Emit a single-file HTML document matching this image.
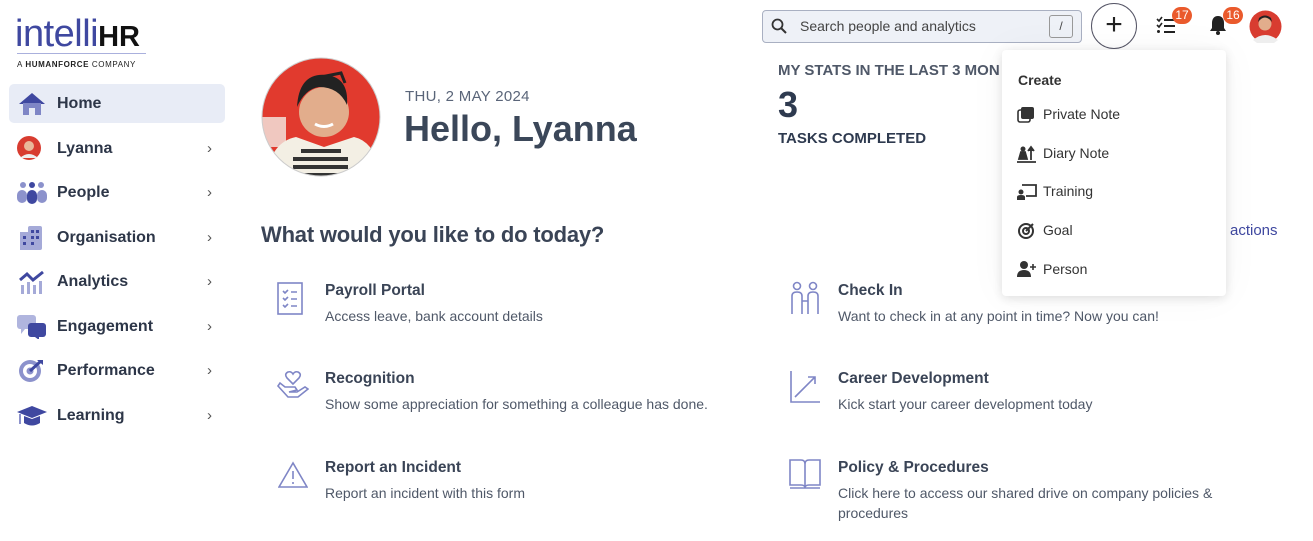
<!DOCTYPE html>
<html><head><meta charset="utf-8"><style>
*{box-sizing:border-box;margin:0;padding:0}
body{width:1313px;height:541px;overflow:hidden;background:#fff;font-family:"Liberation Sans",sans-serif;color:#2e3a4f;position:relative}
.a{position:absolute}
.nav{position:absolute;left:9px;width:216px;height:39px;display:flex;align-items:center;font-size:16px;font-weight:bold;color:#2d3648}
.nav .ic{position:absolute;left:8px;top:8px;width:30px;height:24px}
.nav .t{position:absolute;left:48px}
.nav .ch{position:absolute;left:198px;color:#555;font-weight:normal;font-size:15px}
.tt{position:absolute;font-size:15.5px;font-weight:bold;color:#3a4456}
.ds{position:absolute;font-size:14px;color:#4f5868;line-height:20px}
.mi{position:absolute;left:1043px;font-size:14px;color:#333}
.mic{position:absolute;left:1017px;width:20px;height:18px}
.badge{position:absolute;background:#ea5a2c;color:#fff;font-size:12px;border-radius:9px;height:17px;width:20px;text-align:center;line-height:17px}
</style></head><body>
<div class="a" style="left:15px;top:12px;font-size:38px;color:#3f48a0;letter-spacing:-0.5px;line-height:44px">intelli<b style="color:#111;font-size:29px;letter-spacing:0">HR</b></div>
<div class="a" style="left:17px;top:53px;width:129px;height:1px;background:#aab0dd"></div>
<div class="a" style="left:17px;top:60px;font-size:8px;letter-spacing:0.6px;color:#222">A <b>HUMANFORCE</b> COMPANY</div>

<div class="nav" style="top:84px;background:#e8ecf6;border-radius:5px"><svg class="ic" viewBox="0 0 30 24"><path d="M2 12L15 1l13 11" fill="#3f48a0"/><path d="M6 11h18v12h-6v-7h-6v7H6z" fill="#7f86c6"/></svg><span class="t">Home</span></div>
<div class="nav" style="top:129px"><svg class="ic" viewBox="0 0 30 24" style="left:8px;top:7px"><circle cx="12" cy="12" r="12" fill="#d83c30"/><circle cx="12" cy="10" r="5" fill="#e9b89a"/><path d="M3 22q9-8 18 0" fill="#eee"/></svg><span class="t">Lyanna</span><span class="ch">›</span></div>
<div class="nav" style="top:173px"><svg class="ic" viewBox="0 0 30 24"><circle cx="6" cy="4" r="3" fill="#8c92cc"/><circle cx="15" cy="4" r="3" fill="#3f48a0"/><circle cx="24" cy="4" r="3" fill="#8c92cc"/><rect x="0" y="9" width="10" height="13" rx="5" fill="#8c92cc"/><rect x="20" y="9" width="10" height="13" rx="5" fill="#8c92cc"/><rect x="10" y="9" width="10" height="14" rx="5" fill="#3f48a0"/></svg><span class="t">People</span><span class="ch">›</span></div>
<div class="nav" style="top:218px"><svg class="ic" viewBox="0 0 30 24"><rect x="3" y="6" width="12" height="18" fill="#a5aad8"/><rect x="11" y="0" width="14" height="24" rx="2" fill="#a5aad8"/><g fill="#3f48a0"><rect x="6" y="10" width="3" height="3"/><rect x="6" y="16" width="3" height="3"/><rect x="14" y="4" width="3" height="3"/><rect x="19" y="4" width="3" height="3"/><rect x="14" y="10" width="3" height="3"/><rect x="19" y="10" width="3" height="3"/><rect x="14" y="16" width="3" height="3"/></g></svg><span class="t">Organisation</span><span class="ch">›</span></div>
<div class="nav" style="top:262px"><svg class="ic" viewBox="0 0 30 24"><path d="M3 10l7-6 6 6 10-8" stroke="#3f48a0" stroke-width="3" fill="none"/><g fill="#a5aad8"><rect x="4" y="15" width="3" height="9"/><rect x="10" y="12" width="3" height="12"/><rect x="16" y="15" width="3" height="9"/><rect x="22" y="11" width="3" height="13"/></g></svg><span class="t">Analytics</span><span class="ch">›</span></div>
<div class="nav" style="top:307px"><svg class="ic" viewBox="0 0 30 24"><rect x="0" y="0" width="19" height="14" rx="3" fill="#b0b5de"/><path d="M4 14v5l4-5z" fill="#b0b5de"/><rect x="11" y="8" width="18" height="14" rx="3" fill="#3f48a0"/><path d="M22 22v3l-4-3z" fill="#3f48a0"/></svg><span class="t">Engagement</span><span class="ch">›</span></div>
<div class="nav" style="top:351px"><svg class="ic" viewBox="0 0 30 24"><circle cx="13" cy="12" r="11" fill="#8c92cc"/><circle cx="13" cy="12" r="7" fill="#fff"/><circle cx="13" cy="12" r="3.5" fill="#8c92cc"/><path d="M13 12L24 2" stroke="#3f48a0" stroke-width="3"/><path d="M20 1l6 0 0 5z" fill="#3f48a0"/></svg><span class="t">Performance</span><span class="ch">›</span></div>
<div class="nav" style="top:396px"><svg class="ic" viewBox="0 0 30 24"><path d="M0 8L15 2l15 6-15 6z" fill="#3f48a0"/><path d="M7 12v7q8 5 16 0v-7l-8 3z" fill="#3f48a0"/><path d="M3 10v10" stroke="#8c92cc" stroke-width="2"/></svg><span class="t">Learning</span><span class="ch">›</span></div>

<!-- top bar -->
<div class="a" style="left:762px;top:10px;width:320px;height:33px;background:#eef1f7;border:1px solid #a9b0c2;border-radius:4px"></div>
<svg class="a" style="left:771px;top:18px" width="16" height="16" viewBox="0 0 16 16"><circle cx="6.5" cy="6.5" r="5" stroke="#333" stroke-width="1.8" fill="none"/><path d="M10 10l5 5" stroke="#333" stroke-width="2"/></svg>
<div class="a" style="left:800px;top:18px;font-size:14px;color:#444">Search people and analytics</div>
<div class="a" style="left:1049px;top:15px;width:24px;height:23px;border:1px solid #999;border-radius:3px;font-size:12px;text-align:center;line-height:21px;color:#444">/</div>
<div class="a" style="left:1091px;top:3px;width:46px;height:46px;border:1.5px solid #556;border-radius:50%;font-size:30px;text-align:center;line-height:42px;color:#222;font-weight:300">+</div>
<svg class="a" style="left:1156px;top:16px" width="20" height="18" viewBox="0 0 20 18"><path d="M1 3l2 2 3-4M1 9l2 2 3-4" stroke="#222" stroke-width="1.6" fill="none"/><circle cx="2.5" cy="15.5" r="1.5" fill="#222"/><path d="M8 4h11M8 10h11M8 16h11" stroke="#222" stroke-width="2"/></svg>
<div class="badge" style="left:1172px;top:7px">17</div>
<svg class="a" style="left:1209px;top:15px" width="18" height="20" viewBox="0 0 18 20"><path d="M9 1c-4 0-6 3-6 7v5l-2 3h16l-2-3V8c0-4-2-7-6-7z" fill="#222"/><circle cx="9" cy="18" r="2" fill="#222"/></svg>
<div class="badge" style="left:1223px;top:7px">16</div>
<svg class="a" style="left:1249px;top:10px" width="33" height="33" viewBox="0 0 33 33"><circle cx="16.5" cy="16.5" r="16" fill="#d83c30"/><circle cx="16" cy="14" r="6.5" fill="#e2ad8c"/><path d="M9 12q7-9 14 0l-1-4q-6-5-12 0z" fill="#222"/><path d="M4 30q12-10 25 0l-4 3H8z" fill="#eee"/></svg>

<!-- greeting -->
<svg class="a" style="left:261px;top:57px" width="120" height="120" viewBox="0 0 120 120"><defs><clipPath id="c"><circle cx="60" cy="60" r="59"/></clipPath></defs><g clip-path="url(#c)"><rect width="120" height="120" fill="#e13a2e"/><rect x="0" y="60" width="25" height="30" fill="#f0c8c0"/><circle cx="63" cy="55" r="25" fill="#e2ad8c"/><path d="M36 50q2-35 30-32 22 3 20 30-8-18-28-18-14 2-22 20z" fill="#222"/><path d="M60 20l20-4 4 10" stroke="#222" stroke-width="3" fill="none"/><path d="M5 120q5-35 30-40l28 10 30-10q22 5 27 40z" fill="#f3efe4"/><g stroke="#333" stroke-width="4"><path d="M32 102h55M32 110h55M32 118h55M40 94h40"/></g><path d="M54 67q9 5 18 0" stroke="#fff" stroke-width="3" fill="none"/></g><circle cx="60" cy="60" r="59" fill="none" stroke="#ccc"/></svg>
<div class="a" style="left:405px;top:88px;font-size:15px;color:#5a6579;letter-spacing:0.3px">THU, 2 MAY 2024</div>
<div class="a" style="left:404px;top:108px;font-size:36px;font-weight:bold;color:#3b4759">Hello, Lyanna</div>

<div class="a" style="left:778px;top:62px;font-size:15px;color:#4f5868;font-weight:bold;font-weight:600">MY STATS IN THE LAST 3 MON</div>
<div class="a" style="left:778px;top:84px;font-size:36px;font-weight:bold;color:#2e3a4f">3</div>
<div class="a" style="left:778px;top:130px;font-size:15px;color:#2e3a4f;font-weight:bold">TASKS COMPLETED</div>
<div class="a" style="left:1230px;top:222px;font-size:15px;color:#3f48a0">actions</div>

<div class="a" style="left:261px;top:222px;font-size:22px;color:#3a4456;font-weight:bold;letter-spacing:-0.2px">What would you like to do today?</div>

<svg class="a" style="left:277px;top:281px" width="26" height="34" viewBox="0 0 26 34" fill="none" stroke="#7f86c6" stroke-width="1.6"><rect x="1" y="2" width="24" height="31"/><path d="M6 10l2 2 3-3M6 17l2 2 3-3M6 24l2 2 3-3M14 11h6M14 18h6M14 25h6"/></svg>
<div class="tt" style="left:325px;top:282px">Payroll Portal</div>
<div class="ds" style="left:325px;top:306px">Access leave, bank account details</div>
<svg class="a" style="left:277px;top:368px" width="32" height="34" viewBox="0 0 32 34" fill="none" stroke="#7f86c6" stroke-width="1.6"><path d="M16 16l-6-6q-3-4 1-6 3-1 5 2 2-3 5-2 4 2 1 6z"/><path d="M1 18l10 11h10l10-8-3-2-8 5h-8l8-2-2-3-10 0-5-4z"/></svg>
<div class="tt" style="left:325px;top:370px">Recognition</div>
<div class="ds" style="left:325px;top:394px">Show some appreciation for something a colleague has done.</div>
<svg class="a" style="left:278px;top:461px" width="30" height="28" viewBox="0 0 30 28" fill="none" stroke="#7f86c6" stroke-width="1.6"><path d="M15 2L1 26h28z"/><path d="M15 10v8M15 21v2"/></svg>
<div class="tt" style="left:325px;top:459px">Report an Incident</div>
<div class="ds" style="left:325px;top:483px">Report an incident with this form</div>

<svg class="a" style="left:789px;top:281px" width="32" height="34" viewBox="0 0 32 34" fill="none" stroke="#7f86c6" stroke-width="1.6"><circle cx="8" cy="5" r="3.5"/><circle cx="24" cy="5" r="3.5"/><path d="M3 33V15q0-4 5-4t5 4v18M19 33V15q0-4 5-4t5 4v18M13 20h6"/></svg>
<div class="tt" style="left:838px;top:282px">Check In</div>
<div class="ds" style="left:838px;top:306px">Want to check in at any point in time? Now you can!</div>
<svg class="a" style="left:789px;top:370px" width="32" height="34" viewBox="0 0 32 34" fill="none" stroke="#7f86c6" stroke-width="1.6"><path d="M2 1v31h29"/><path d="M6 27l20-20M19 7h7v7"/></svg>
<div class="tt" style="left:838px;top:370px">Career Development</div>
<div class="ds" style="left:838px;top:394px">Kick start your career development today</div>
<svg class="a" style="left:789px;top:457px" width="32" height="34" viewBox="0 0 32 34" fill="none" stroke="#7f86c6" stroke-width="1.6"><path d="M1 3h11q4 0 4 4v24q0-3-4-3H1zM31 3H20q-4 0-4 4v24q0-3 4-3h11z"/><path d="M1 31h30"/></svg>
<div class="tt" style="left:838px;top:459px">Policy &amp; Procedures</div>
<div class="ds" style="left:838px;top:483px;width:400px">Click here to access our shared drive on company policies &amp;<br>procedures</div>

<!-- dropdown -->
<div class="a" style="left:1002px;top:50px;width:224px;height:246px;background:#fff;border-radius:4px;box-shadow:0 2px 10px rgba(0,0,0,0.12),0 0 40px rgba(0,0,0,0.04)"></div>
<div class="a" style="left:1018px;top:72px;font-size:14px;font-weight:bold;color:#333">Create</div>
<svg class="mic" style="top:106px" viewBox="0 0 20 18"><rect x="1" y="4" width="12" height="12" rx="2" fill="none" stroke="#333" stroke-width="1.6"/><rect x="4" y="1" width="13" height="12" rx="2" fill="#333"/></svg>
<div class="mi" style="top:106px">Private Note</div>
<svg class="mic" style="top:145px" viewBox="0 0 20 18"><circle cx="6" cy="4" r="2.5" fill="#333"/><path d="M2 14l2-7h4l2 7zM14 3v12M11 6l3-4 3 4M0 17h19" stroke="#333" stroke-width="1.8" fill="#333"/></svg>
<div class="mi" style="top:145px">Diary Note</div>
<svg class="mic" style="top:183px" viewBox="0 0 20 18"><path d="M5 2h14v11H9" stroke="#333" stroke-width="1.8" fill="none"/><circle cx="4" cy="9" r="2.5" fill="#333"/><path d="M0 17v-3q0-2 4-2t4 2v3z" fill="#333"/></svg>
<div class="mi" style="top:183px">Training</div>
<svg class="mic" style="top:222px" viewBox="0 0 20 18"><circle cx="9" cy="9" r="7" fill="none" stroke="#333" stroke-width="2"/><circle cx="9" cy="9" r="3" fill="none" stroke="#333" stroke-width="2"/><path d="M9 9l7-7" stroke="#333" stroke-width="2"/></svg>
<div class="mi" style="top:222px">Goal</div>
<svg class="mic" style="top:260px" viewBox="0 0 20 18"><circle cx="7" cy="5" r="4" fill="#333"/><path d="M0 17q0-7 7-7t7 7z" fill="#333"/><path d="M16 4v6M13 7h6" stroke="#333" stroke-width="1.6"/></svg>
<div class="mi" style="top:261px">Person</div>
</body></html>
